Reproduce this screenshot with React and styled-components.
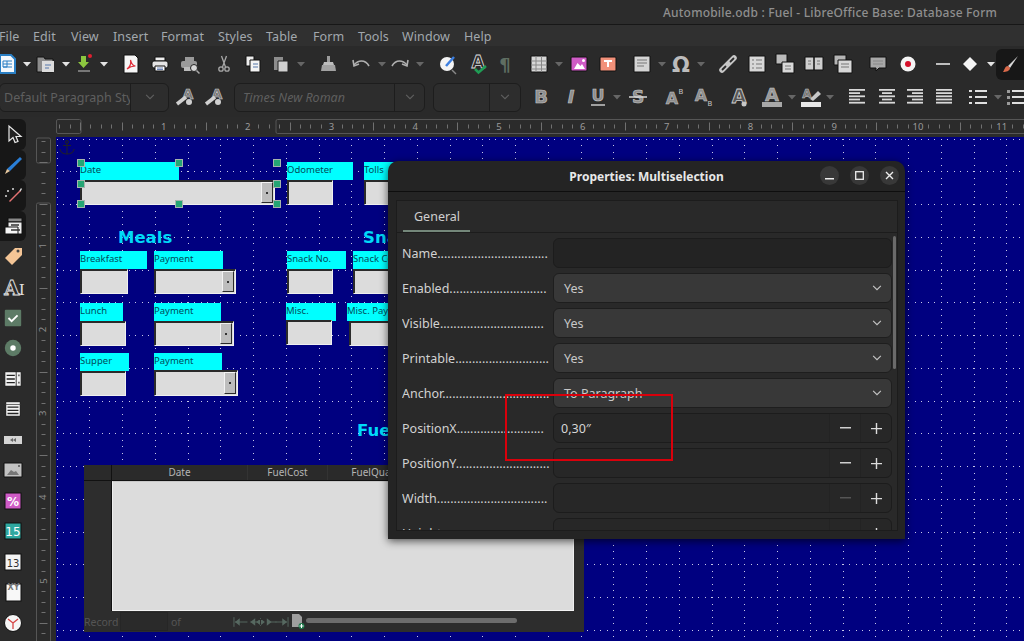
import React from 'react'
import styled, { createGlobalStyle } from 'styled-components'

const CANVAS_X = 56
const CANVAS_Y = 137
const UI_FONT = `"Noto Sans", "Open Sans", sans-serif`

const Global = createGlobalStyle`
	html, body {
		margin: 0;
		padding: 0;
		background: #2b2b2b;
		overflow: hidden;
	}
`

const Page = styled.div`
	position: relative;
	display: flex;
	flex-direction: column;
	width: 1024px;
	height: 641px;
	overflow: hidden;
	font-family: ${UI_FONT};
	background: #2b2b2b;
`

const TitleBar = styled.div`
	display: flex;
	justify-content: flex-end;
	align-items: center;
	height: 24px;
	padding-right: 27px;
	border-bottom: 1px solid #171717;
	background: #2c2c2c;
	color: #8f8f8f;
	font-size: 12px;
	font-weight: 500;
	letter-spacing: 0.2px;
`

const MenuBar = styled.div`
	display: flex;
	align-items: center;
	box-sizing: border-box;
	height: 21px;
	padding-top: 1px;
	margin-left: -1px;
	background: #303030;
`

const MenuItem = styled.span`
	width: ${p => p.$w}px;
	color: #a2a8ae;
	font-size: 12.5px;
	letter-spacing: 0.1px;
`

const Toolbar = styled.div`
	display: flex;
	align-items: center;
	box-sizing: border-box;
	height: ${p => p.$h}px;
	padding-bottom: ${p => p.$pb || 0}px;
	background: #2a2a2a;
`

const ToolSlot = styled.div`
	display: flex;
	justify-content: center;
	align-items: center;
	flex: none;
	width: ${p => p.$w}px;
	margin-left: ${p => p.$ml || 0}px;
	height: 100%;
	${p => p.$active && 'background: #171717; border-radius: 6px 0 0 6px; height: 31px;'}
	& > svg {
		flex: none;
	}
`

const Combo = styled.div`
	display: flex;
	align-items: stretch;
	flex: none;
	box-sizing: border-box;
	width: ${p => p.$w}px;
	height: 29px;
	margin-left: ${p => p.$ml}px;
	border: 1px solid #1d1d1d;
	border-radius: 6px;
	background: #2d2d2d;
	color: #5f5f5f;
	font-size: 12.5px;
`

const ComboText = styled.div`
	flex: 1;
	overflow: hidden;
	padding: 0 0 0 ${p => p.$pad}px;
	line-height: 27px;
	white-space: nowrap;
	font-style: ${p => (p.$italic ? 'italic' : 'normal')};
`

const ComboButton = styled.div`
	display: flex;
	justify-content: center;
	align-items: center;
	flex: none;
	width: ${p => p.$w}px;
	border-left: 1px solid #1d1d1d;
`

const Workspace = styled.div`
	display: flex;
	flex: 1;
	min-height: 0;
`

const Sidebar = styled.div`
	flex: none;
	display: flex;
	flex-direction: column;
	width: 27px;
	padding-top: 2px;
`

const SideSlot = styled.div`
	display: flex;
	justify-content: center;
	align-items: center;
	flex: none;
	width: 26px;
	height: 30.55px;
	${p => p.$active && 'background: #171717; border-radius: 0 6px 6px 0;'}
`

const Main = styled.div`
	display: flex;
	flex: 1;
	flex-direction: column;
	min-width: 0;
`

const HRuler = styled.div`
	flex: none;
	box-sizing: border-box;
	height: 20px;
	padding: 2px 0 0 29px;
`

const MainRow = styled.div`
	display: flex;
	flex: 1;
	min-height: 0;
`

const VRuler = styled.div`
	flex: none;
	width: 29px;
	padding-left: 9px;
	box-sizing: border-box;
`

const RulerSvg = styled.svg`
	display: block;
`

const Canvas = styled.div`
	position: relative;
	flex: 1;
	overflow: hidden;
	background: #000080;
`

const GridDots = styled.svg`
	position: absolute;
	left: 0;
	top: 0;
`

const FormLabel = styled.div`
	position: absolute;
	left: ${p => p.$x - CANVAS_X}px;
	top: ${p => p.$y - CANVAS_Y}px;
	width: ${p => p.$w}px;
	height: 18px;
	overflow: hidden;
	background: #00ffff;
	color: #004c5a;
	font-size: 9.5px;
	line-height: 15px;
	white-space: nowrap;
`

const FormField = styled.div`
	position: absolute;
	box-sizing: border-box;
	left: ${p => p.$x - CANVAS_X}px;
	top: ${p => p.$y - CANVAS_Y}px;
	width: ${p => p.$w}px;
	height: ${p => p.$h || 25}px;
	border: 1px solid;
	border-color: #2a2a2a #efefef #efefef #2a2a2a;
	box-shadow: inset 1px 1px 0 #2a2a2a;
	background: #dcdcdc;
`

const SpinBox = styled.div`
	position: absolute;
	right: 1px;
	top: 1px;
	bottom: 1px;
	width: 10px;
	display: flex;
	justify-content: center;
	align-items: center;
	border: 1px solid;
	border-color: #f2f2f2 #2a2a2a #2a2a2a #f2f2f2;
	background: #bdbdbd;
	&::after {
		content: '';
		width: 2px;
		height: 2px;
		background: #333;
	}
`

const Heading = styled.div`
	position: absolute;
	left: ${p => p.$x - CANVAS_X}px;
	top: ${p => p.$y - CANVAS_Y}px;
	color: #00daf8;
	font-family: "DejaVu Sans", sans-serif;
	font-size: 16.5px;
	font-weight: 700;
	line-height: 20px;
`

const Handle = styled.div`
	position: absolute;
	box-sizing: border-box;
	left: ${p => p.$x - CANVAS_X - 4}px;
	top: ${p => p.$y - CANVAS_Y - 4}px;
	width: 8px;
	height: 8px;
	border: 1px solid #a6b4ad;
	background: #25a574;
`

const AnchorMark = styled.div`
	position: absolute;
	left: 2px;
	top: 2px;
`

const GridControl = styled.div`
	position: absolute;
	display: flex;
	flex-direction: column;
	left: ${84 - CANVAS_X}px;
	top: ${465 - CANVAS_Y}px;
	width: 500px;
	height: 167px;
	background: #2d2d2d;
`

const GridHeader = styled.div`
	display: flex;
	flex: none;
	height: 15px;
	border-bottom: 1px solid #111;
	background: #2a2a2a;
	color: #b4b4b4;
	font-size: 10px;
	line-height: 15px;
`

const GridHeadCell = styled.div`
	flex: none;
	box-sizing: border-box;
	width: ${p => p.$w}px;
	border-right: 1px solid ${p => (p.$strong ? '#111' : '#333')};
	text-align: center;
	white-space: nowrap;
`

const GridBody = styled.div`
	display: flex;
	flex: 1;
	min-height: 0;
`

const RowHeader = styled.div`
	flex: none;
	width: 28px;
	border-right: 1px solid #111;
	box-sizing: border-box;
`

const GridWhite = styled.div`
	flex: none;
	box-sizing: border-box;
	width: 462px;
	border: 1px solid;
	border-color: #c8c8c8 #eee #f4f4f4 #eee;
	background: #dcdcdc;
`

const GridNav = styled.div`
	display: flex;
	align-items: center;
	flex: none;
	height: 21px;
	color: #555;
	font-size: 10.5px;
`

const NavText = styled.span`
	flex: none;
	width: ${p => p.$w}px;
`

const NavBox = styled.div`
	flex: none;
	box-sizing: border-box;
	width: 48px;
	height: 19px;
	margin: 0 3px 0 2px;
	border: 1px solid #262626;
	background: #2a2a2a;
`

const NavThumb = styled.div`
	flex: none;
	width: 211px;
	height: 5px;
	margin: 0 0 2px 1px;
	border-radius: 3px;
	background: #6d6d6d;
`

const NavIcon = styled.svg`
	flex: none;
	margin-left: ${p => p.$ml || 0}px;
`

const Dialog = styled.div`
	position: absolute;
	display: flex;
	flex-direction: column;
	left: 388px;
	top: 161px;
	box-sizing: border-box;
	width: 517px;
	height: 378px;
	border-radius: 10px 10px 0 0;
	background: #242424;
	box-shadow: 0 2px 9px rgba(0, 0, 0, 0.65);
`

const DialogTitle = styled.div`
	position: relative;
	display: flex;
	justify-content: center;
	align-items: center;
	flex: none;
	height: 30px;
	border-bottom: 1px solid #0e0e0e;
	color: #e8e8e8;
	font-size: 12px;
	font-weight: 700;
`

const WindowButtons = styled.div`
	position: absolute;
	right: 6px;
	top: 5px;
	display: flex;
	gap: 11px;
`

const WindowButton = styled.div`
	display: flex;
	justify-content: center;
	align-items: center;
	width: 19px;
	height: 19px;
	border-radius: 50%;
	background: #383838;
`

const Frame = styled.div`
	display: flex;
	flex-direction: column;
	box-sizing: border-box;
	height: 331px;
	margin: 8px 7px 0 8px;
	border: 1px solid #1c1c1c;
	background: #292929;
	overflow: hidden;
`

const TabBar = styled.div`
	flex: none;
	height: 31px;
	padding-left: 6px;
	border-bottom: 1px solid #1c1c1c;
`

const Tab = styled.div`
	box-sizing: border-box;
	width: 67px;
	height: 31px;
	padding: 7px 0 0 11px;
	border-bottom: 2px solid #74877a;
	color: #cfcfcf;
	font-size: 12.5px;
`

const Props = styled.div`
	position: relative;
	display: flex;
	flex-direction: column;
	gap: 5px;
	padding: 5px 0 0 5px;
`

const Row = styled.div`
	display: flex;
	flex: none;
	align-items: center;
	height: 30px;
`

const RowLabel = styled.div`
	flex: none;
	width: 151px;
	overflow: hidden;
	color: #d2d2d2;
	font-size: 12.5px;
	white-space: nowrap;
`

const Select = styled.div`
	display: flex;
	justify-content: space-between;
	align-items: center;
	box-sizing: border-box;
	width: 339px;
	height: 30px;
	padding: 0 9px 0 10px;
	border: 1px solid #1e1e1e;
	border-radius: 6px;
	background: #383838;
	color: #c8c8c8;
	font-size: 12.5px;
`

const Entry = styled.div`
	display: flex;
	align-items: center;
	box-sizing: border-box;
	width: 339px;
	height: 30px;
	padding-left: 7px;
	border: 1px solid #1c1c1c;
	border-radius: 6px;
	background: ${p => (p.$plain ? '#232323' : '#272727')};
	color: #d6d6d6;
	font-size: 12.5px;
`

const EntryValue = styled.div`
	flex: 1;
`

const SpinButton = styled.div`
	display: flex;
	justify-content: center;
	align-items: center;
	flex: none;
	width: 30px;
	height: 28px;
	border-left: 1px solid #232323;
`

const Scrollbar = styled.div`
	position: absolute;
	right: 1px;
	top: 3px;
	width: 3px;
	height: 133px;
	border-radius: 2px;
	background: #6a6a6a;
`

const RedBox = styled.div`
	position: absolute;
	box-sizing: border-box;
	left: 505px;
	top: 394px;
	width: 168px;
	height: 67px;
	border: 2px solid #d9000b;
`

const Ic = ({ s = 22, children }) => (
	<svg width={s} height={s} viewBox="0 0 22 22" fill="none">{children}</svg>
)

const Drop = ({ dim }) => (
	<svg width="8" height="5" viewBox="0 0 8 5"><path d="M0 0h8L4 4.500z" fill={dim ? '#666' : '#e4e4e4'} /></svg>
)

const Chevron = ({ color = '#c4c4c4' }) => (
	<svg width="10" height="6" viewBox="0 0 11 7" fill="none"><path d="M1 1l4.500 4.500L10 1" stroke={color} strokeWidth="1.300" /></svg>
)

const icons = {
	doc: <Ic><path d="M3 2h11l4 4v14H3z" fill="#f4f8fc" stroke="#2a7fc4" strokeWidth="2" /><path d="M6 8h9M6 11h9M6 14h9M6 8v6h4V8" stroke="#2a7fc4" /></Ic>,
	open: <Ic><path d="M2 4h7l1 2h8v13H2z" fill="#8c8c8c" stroke="#111" /><path d="M7 8h12v11H7z" fill="#dcdcdc" /><path d="M10 12h6M10 15h4" stroke="#5577aa" /></Ic>,
	save: <Ic><path d="M8 3h5v6h3l-5.500 6L5 9h3z" fill="#8cc63f" /><circle cx="17" cy="3" r="2" fill="#e02030" /><path d="M5 18h12" stroke="#777" strokeWidth="2" /></Ic>,
	pdf: <Ic><path d="M4 2h11l3 3v15H4z" fill="#f6f6f6" stroke="#111" /><path d="M7 16c3-2 4-6 3.500-9 1 4 3 6 5 6-3 0-6 1-8.500 3z" stroke="#e0303c" strokeWidth="1.200" /></Ic>,
	print: <Ic><path d="M6 4h10v4H6z" fill="#eee" stroke="#111" /><rect x="3" y="8" width="16" height="7" rx="2" fill="#e4e4e4" stroke="#111" /><path d="M6 13h10v5H6z" fill="#fff" stroke="#111" /><path d="M8 15h6M8 16.500h6" stroke="#6d84b4" /></Ic>,
	preview: <Ic><path d="M6 4h9v4H6z" fill="#999" /><rect x="2" y="8" width="16" height="7" rx="2" fill="#9a9a9a" /><path d="M5 14h8v4H5z" fill="#bbb" /><circle cx="15" cy="15" r="3.500" fill="#d8d8d8" stroke="#222" /><path d="M17.500 17.500l3 3" stroke="#aaa" strokeWidth="1.500" /></Ic>,
	cut: <Ic><path d="M8.500 3l4 11M13.500 3l-4 11" stroke="#a8a8a8" strokeWidth="1.300" /><circle cx="8" cy="16" r="2.200" stroke="#a8a8a8" strokeWidth="1.300" /><circle cx="14" cy="16" r="2.200" stroke="#a8a8a8" strokeWidth="1.300" /></Ic>,
	copy: <Ic><path d="M4 3h8v10H4z" fill="#eee" stroke="#111" /><path d="M8 7h10v12H8z" fill="#f4f4f4" stroke="#111" /><path d="M11 11h5M11 14h5" stroke="#5577aa" /></Ic>,
	paste: <Ic><path d="M4 4h9v13H4z" fill="#8d8d8d" /><path d="M8 8h10v11H8z" fill="#d0d0d0" stroke="#222" /></Ic>,
	clone: <Ic><path d="M10 3h3v6h-3z" fill="#9c9c9c" /><path d="M7 9h9l1 3H6z" fill="#bdbdbd" /><path d="M5 12h13l1 6H4z" fill="#a2a2a2" /></Ic>,
	undo: <Ic><path d="M3 7l1 6 5-2" stroke="#b0b0b0" strokeWidth="1.600" /><path d="M4 12c4-5 11-6 15 1" stroke="#b0b0b0" strokeWidth="1.600" /></Ic>,
	redo: <Ic><path d="M19 7l-1 6-5-2" stroke="#b0b0b0" strokeWidth="1.600" /><path d="M18 12c-4-5-11-6-15 1" stroke="#b0b0b0" strokeWidth="1.600" /></Ic>,
	spell: <Ic><circle cx="10" cy="11" r="7" fill="#f4f4f4" /><path d="M9 13L17 4" stroke="#3d7fe0" strokeWidth="2.500" /><path d="M15 17l4 4" stroke="#888" strokeWidth="1.500" /></Ic>,
	acheck: <Ic><text x="11" y="15" textAnchor="middle" fontFamily="DejaVu Sans" fontWeight="700" fontSize="17" fill="#2a2a2a" stroke="#dcdcdc" strokeWidth="0.800">A</text><path d="M8 16l3.500 3.500L19 13" stroke="#1f9d55" strokeWidth="2.500" /></Ic>,
	table: <Ic><path d="M3 3h16v16H3z" fill="#d6d6d6" stroke="#111" /><path d="M3 8h16M3 12h16M3 16h16M8 3v16M13.500 3v16" stroke="#888" /></Ic>,
	image: <Ic><rect x="3" y="4" width="16" height="14" rx="1" fill="#cf5bc6" stroke="#111" /><path d="M6 16l3.500-6 3 3 1.500-2 3 5z" fill="#fff" /><circle cx="15.500" cy="7.500" r="1.500" fill="#fff" /></Ic>,
	textbox: <Ic><rect x="3" y="4" width="16" height="14" rx="1" fill="#f2917a" stroke="#111" /><path d="M7 7h8v2h-3v5h-2V9H7z" fill="#fff" /></Ic>,
	field: <Ic><path d="M3 3h16v16H3z" fill="#d4d4d4" stroke="#111" /><path d="M6 7h10M6 10h10M6 13h7" stroke="#777" /></Ic>,
	omega: <Ic><text x="11" y="19" textAnchor="middle" fontFamily="DejaVu Sans" fontWeight="700" fontSize="21" fill="#bcbcbc">Ω</text></Ic>,
	link: <Ic><path d="M5 17L17 5" stroke="#c8c8c8" strokeWidth="5.500" strokeLinecap="round" /><path d="M5.500 16.500l3-3M13.500 8.500l3-3" stroke="#2a2a2a" strokeWidth="1.800" strokeLinecap="round" /></Ic>,
	list: <Ic><path d="M3 3h16v16H3z" fill="#d8d8d8" stroke="#111" /><path d="M6 7h2M10 7h6M6 11h2M10 11h6M6 15h2M10 15h6" stroke="#777" /></Ic>,
	pages: <Ic><path d="M2 1h11v10H2z" fill="#bbb" stroke="#111" /><path d="M8 9h12v11H8z" fill="#d8d8d8" stroke="#111" /><path d="M11 13h6M11 16h6" stroke="#777" /></Ic>,
	book: <Ic><path d="M2 4h9v13H2zM11 4h9v13h-9z" fill="#cfcfcf" stroke="#111" /><path d="M5 8h3M14 8h3M5 11h3M14 11h3" stroke="#777" /></Ic>,
	cross: <Ic><path d="M2 2h12v10H2z" fill="#b5b5b5" stroke="#111" /><path d="M6 7h14v13H6z" fill="#d8d8d8" stroke="#111" /><path d="M9 11h8M9 14h8" stroke="#777" /></Ic>,
	comment: <Ic><path d="M3 4h16v11h-7l-3 3v-3H3z" fill="#a8a8a8" stroke="#111" /><path d="M6 8h10M6 11h10" stroke="#888" /></Ic>,
	record: <Ic><circle cx="11" cy="11" r="7.500" fill="#f4f4f4" /><circle cx="11" cy="11" r="3" fill="#d5102a" /></Ic>,
	line: <Ic><path d="M4 11h14" stroke="#f0f0f0" strokeWidth="1.500" /></Ic>,
	diamond: <Ic><path d="M11 4l7 7-7 7-7-7z" fill="#f4f4f4" /></Ic>,
	brush: <Ic><path d="M19 3L9 13l2 2z" fill="#d8d8d8" /><path d="M9 13c-3 0-3 3-5 6 3 0 7-1 7-4z" fill="#d9694a" /></Ic>,
	styleA: <Ic><text x="14" y="13" textAnchor="middle" fontFamily="DejaVu Sans" fontWeight="700" fontSize="14" fill="#777" stroke="#ccc" strokeWidth="0.600">A</text><path d="M3 18l9-7" stroke="#d0d0d0" strokeWidth="3.500" /><circle cx="15" cy="16" r="3" fill="#d0d0d0" /></Ic>,
}

const glyph = (text, extra = {}) => (
	<Ic>
		<text x="11" y="17" textAnchor="middle" fontFamily="DejaVu Sans" fontWeight="700" fontSize="17" fill="#8e8e8e" stroke="#c8c8c8" strokeWidth="0.600" {...extra}>{text}</text>
	</Ic>
)

const alignIcon = (rows) => (
	<Ic>
		{rows.map(([x, w], i) => <rect key={i} x={x} y={3 + i * 3.2} width={w} height="1.800" fill="#d8d8d8" />)}
	</Ic>
)

const formatIcons = {
	bold: glyph('B', { fontSize: 18 }),
	italic: glyph('I', { fontStyle: 'italic', fontSize: 18 }),
	underline: <Ic><text x="11" y="15" textAnchor="middle" fontFamily="DejaVu Sans" fontWeight="700" fontSize="16" fill="#8e8e8e" stroke="#c8c8c8" strokeWidth="0.600">U</text><path d="M4 19h14" stroke="#c8c8c8" strokeWidth="1.500" /></Ic>,
	strike: <Ic><text x="11" y="17" textAnchor="middle" fontFamily="DejaVu Sans" fontWeight="700" fontSize="17" fill="#8e8e8e" stroke="#c8c8c8" strokeWidth="0.600">S</text><path d="M2 11h18" stroke="#d8d8d8" strokeWidth="1.500" /></Ic>,
	sup: <Ic><text x="9" y="18" textAnchor="middle" fontFamily="DejaVu Sans" fontWeight="700" fontSize="16" fill="#8e8e8e" stroke="#c8c8c8" strokeWidth="0.500">A</text><text x="18" y="8" textAnchor="middle" fontFamily="DejaVu Sans" fontSize="7" fill="#c8c8c8">B</text></Ic>,
	sub: <Ic><text x="9" y="15" textAnchor="middle" fontFamily="DejaVu Sans" fontWeight="700" fontSize="16" fill="#8e8e8e" stroke="#c8c8c8" strokeWidth="0.500">A</text><text x="18" y="20" textAnchor="middle" fontFamily="DejaVu Sans" fontSize="7" fill="#c8c8c8">B</text></Ic>,
	shadow: <Ic><text x="11" y="17" textAnchor="middle" fontFamily="DejaVu Sans" fontWeight="700" fontSize="19" fill="#555" stroke="#cfcfcf" strokeWidth="0.800">A</text><circle cx="16" cy="18" r="2.500" fill="#c8c8c8" /></Ic>,
	color: <Ic><text x="11" y="15" textAnchor="middle" fontFamily="DejaVu Sans" fontWeight="700" fontSize="18" fill="#999" stroke="#c8c8c8" strokeWidth="0.500">A</text><rect x="1" y="16" width="20" height="5" fill="#a8a8a8" /></Ic>,
	highlight: <Ic><text x="7" y="12" textAnchor="middle" fontFamily="DejaVu Sans" fontWeight="700" fontSize="12" fill="#777" stroke="#c8c8c8" strokeWidth="0.500">A</text><path d="M10 13l8-8 3 3-8 7z" fill="#c8c8c8" /><rect x="1" y="16" width="20" height="5" fill="#e8e8e8" /></Ic>,
	left: alignIcon([[3, 16], [3, 11], [3, 16], [3, 11], [3, 16]]),
	center: alignIcon([[3, 16], [6, 10], [3, 16], [6, 10], [3, 16]]),
	right: alignIcon([[3, 16], [8, 11], [3, 16], [8, 11], [3, 16]]),
	justify: alignIcon([[3, 16], [3, 16], [3, 16], [3, 16], [3, 16]]),
	bullets: <Ic>{[4, 10, 16].map(y => <g key={y}><rect x="2" y={y} width="3" height="2" fill="#e0e0e0" /><rect x="8" y={y} width="12" height="2" fill="#e0e0e0" /></g>)}</Ic>,
	numbers: <Ic>{[4, 10, 16].map(y => <g key={y}><rect x="3" y={y} width="3" height="3" fill="#9a9a9a" /><rect x="8" y={y} width="13" height="2" fill="#e0e0e0" /></g>)}</Ic>,
}

const topTools = [
	[8, icons.doc], [27, <Drop />], [46, icons.open], [66, <Drop />], [84, icons.save], [104, <Drop />],
	[131, icons.pdf], [160, icons.print], [190, icons.preview], [224, icons.cut], [253, icons.copy],
	[281, icons.paste], [301, <Drop dim />], [328, icons.clone], [361, icons.undo], [382, <Drop dim />],
	[400, icons.redo], [420, <Drop dim />], [448, icons.spell], [478, icons.acheck],
	[505, <Ic><text x="11" y="18" textAnchor="middle" fontFamily="DejaVu Sans" fontSize="18" fontWeight="700" fill="#5f6e62">¶</text></Ic>],
	[539, icons.table], [559, <Drop dim />], [579, icons.image], [608, icons.textbox], [642, icons.field],
	[662, <Drop dim />], [681, icons.omega], [701, <Drop dim />], [728, icons.link], [757, icons.list],
	[785, icons.pages], [814, icons.book], [843, icons.cross], [878, icons.comment], [908, icons.record],
	[943, icons.line], [970, icons.diamond], [991, <Drop />],
]

const formatTools = [
	[541, formatIcons.bold], [571, formatIcons.italic], [598, formatIcons.underline], [617, <Drop dim />],
	[638, formatIcons.strike], [674, formatIcons.sup], [703, formatIcons.sub], [739, formatIcons.shadow],
	[772, formatIcons.color], [792, <Drop dim />], [811, formatIcons.highlight], [830, <Drop dim />],
	[857, formatIcons.left], [887, formatIcons.center], [915, formatIcons.right], [944, formatIcons.justify],
	[978, formatIcons.bullets], [998, <Drop dim />], [1015, formatIcons.numbers],
]

// fixed width slots, the margin is what puts each icon's centre on the given x
const SLOT = 16
const withMargins = (tools, start) => {
	let edge = start
	return tools.map(([c, icon]) => {
		const ml = c - SLOT / 2 - edge
		edge = c + SLOT / 2
		return { ml, icon }
	})
}

const menus = [
	['File', 34], ['Edit', 38], ['View', 42], ['Insert', 48], ['Format', 57], ['Styles', 48],
	['Table', 47], ['Form', 45], ['Tools', 44], ['Window', 62], ['Help', 40],
]

const sideIcons = [
	<Ic><path d="M7 3v15l4-3.500 2 5 3-1-2-5h5z" fill="#222" stroke="#e8e8e8" strokeWidth="1.200" /></Ic>,
	<Ic><path d="M18 3l2 2L8 17l-3-2z" fill="#2a7fd8" /><path d="M5 15l-2 5 5-3z" fill="#e8c9a0" /></Ic>,
	<Ic><path d="M18 6L7 17l1 1L19 7z" fill="#e57373" /><path d="M17.500 6.500l1 1L20 5l-1-1z" fill="#ddd" /><circle cx="6" cy="7" r="1" fill="#ddd" /><circle cx="11" cy="5" r="1" fill="#ddd" /><circle cx="4" cy="12" r="1" fill="#ddd" /></Ic>,
	<Ic><path d="M6 3h14v4H6z" fill="#888" stroke="#111" /><path d="M6 7h14v12H6z" fill="#eee" stroke="#111" /><path d="M3 12h13v7H3z" fill="#f6f6f6" stroke="#111" /><path d="M9 10h8M9 15h9" stroke="#333" strokeWidth="1.300" /></Ic>,
	<Ic><path d="M3 13L13 3h7v7L10 20z" fill="#f4c596" /><circle cx="16" cy="6" r="1.500" fill="#444" /></Ic>,
	<Ic s={24}><text x="10" y="18" textAnchor="middle" fontFamily="DejaVu Serif" fontWeight="700" fontSize="18" fill="#2a2a2a" stroke="#e0e0e0" strokeWidth="0.800">A</text><text x="19" y="18" textAnchor="middle" fontFamily="DejaVu Serif" fontSize="14" fill="#e0e0e0">I</text></Ic>,
	<Ic s={20}><rect x="2" y="2" width="18" height="18" rx="1" fill="#5d7b66" /><path d="M6 11l3.500 3.500L16 8" stroke="#fff" strokeWidth="2" /></Ic>,
	<Ic s={20}><circle cx="11" cy="11" r="9" fill="#5d7b66" /><circle cx="11" cy="11" r="3" fill="#fff" /></Ic>,
	<Ic s={20}><path d="M2 3h18v16H2z" fill="#f2f2f2" stroke="#111" /><path d="M4 7h9M4 11h9M4 15h9" stroke="#222" strokeWidth="1.500" /><path d="M14.500 3v16" stroke="#222" /><path d="M17.500 8V6M17.500 16v-2" stroke="#444" strokeWidth="1.500" /></Ic>,
	<Ic s={20}><path d="M3 3h16v16H3z" fill="#f2f2f2" stroke="#111" /><path d="M5 9h12M5 12.500h12M5 16h12" stroke="#222" strokeWidth="1.500" /><path d="M3 6h16" stroke="#555" /></Ic>,
	<Ic><rect x="2" y="7" width="18" height="8" fill="#d4d4d4" /><path d="M11 9l-3 2 3 2zM14 9l-3 2 3 2z" fill="#666" /></Ic>,
	<Ic><path d="M2 4h18v14H2z" fill="#c2c2c2" stroke="#111" /><path d="M5 16l4-5 3 2 2-1 3 4z" fill="#777" /><circle cx="17" cy="7" r="1" fill="#555" /></Ic>,
	<Ic><rect x="3" y="3" width="16" height="16" fill="#cf5bc6" stroke="#111" /><text x="11" y="16" textAnchor="middle" fontFamily="DejaVu Sans" fontWeight="700" fontSize="12" fill="#fff">%</text></Ic>,
	<Ic><rect x="3" y="3" width="16" height="16" fill="#2fa8a0" stroke="#111" /><text x="11" y="16" textAnchor="middle" fontFamily="DejaVu Sans" fontSize="12" fill="#fff">15</text></Ic>,
	<Ic><rect x="3" y="3" width="16" height="16" fill="#f4f4f4" stroke="#111" /><text x="11" y="15.500" textAnchor="middle" fontFamily="DejaVu Sans" fontSize="10" fill="#333">13</text></Ic>,
	<Ic><rect x="4" y="3" width="15" height="17" fill="#f8f8f8" stroke="#111" /><text x="11.500" y="9" textAnchor="middle" fontFamily="DejaVu Sans" fontWeight="700" fontSize="8" fill="#777">XY</text></Ic>,
	<Ic><circle cx="11" cy="11" r="8.500" fill="#f6f6f6" stroke="#111" /><path d="M11 11V17M11 11L6 7M11 11l5-4" stroke="#d64545" strokeWidth="1.300" /></Ic>,
]

const INCH = 83.8

const Ruler = ({ vertical, length, zero, boxes, lastNumber }) => {
	const ticks = []
	for (let i = -2; zero + i * (INCH / 8) < length; i++) {
		if (i % 8 === 0 && i !== 0) continue
		const half = i % 4 === 0
		ticks.push({ p: Math.round(zero + i * (INCH / 8)), len: half ? 8 : 4 })
	}
	const mid = 7.5
	const nums = []
	for (let n = 1; n <= lastNumber; n++) nums.push(n)
	const w = vertical ? 15 : length
	const h = vertical ? length : 15
	return (
		<RulerSvg width={w} height={h}>
			{boxes.map(([a, b], i) => (
				vertical
					? <rect key={i} x="0.500" y={a} width="14" height={b - a} rx="1.500" fill="none" stroke="#565656" />
					: <rect key={i} x={a} y="0.500" width={b - a} height="14" rx="1.500" fill="none" stroke="#565656" />
			))}
			{ticks.map(t => (
				vertical
					? <rect key={t.p} x={mid - t.len / 2} y={t.p} width={t.len} height="1" fill="#707070" />
					: <rect key={t.p} x={t.p} y={mid - t.len / 2} width="1" height={t.len} fill="#707070" />
			))}
			{nums.map(n => {
				const p = zero + n * INCH
				return vertical
					? <text key={n} x={mid} y={p + 3} textAnchor="middle" fontFamily="Noto Sans" fontSize="9.500" fill="#8c8c8c" transform={`rotate(-90 ${mid} ${p})`}>{n}</text>
					: <text key={n} x={p} y={mid + 3.500} textAnchor="middle" fontFamily="Noto Sans" fontSize="9.500" fill="#9a9a9a">{n}</text>
			})}
		</RulerSvg>
	)
}

const gridPath = (width, height) => {
	const step = 32.75
	const sub = step / 5
	let d = ''
	for (let y = 1.5; y < height; y += step) {
		for (let x = 0.5; x < width; x += sub) d += `M${Math.round(x)} ${Math.round(y)}h1v1h-1z`
	}
	for (let x = 0.5; x < width; x += step) {
		for (let y = 1.5; y < height; y += sub) d += `M${Math.round(x)} ${Math.round(y)}h1v1h-1z`
	}
	return d
}

const dotsPath = gridPath(968, 504)

const labels = [
	['Date', 80, 162, 99], ['Odometer', 287, 162, 66], ['Tolls', 364, 162, 40],
	['Breakfast', 80, 251, 67], ['Payment', 154, 251, 69], ['Snack No.', 287, 251, 59], ['Snack Cost', 353, 251, 50],
	['Lunch', 80, 303, 43], ['Payment', 154, 303, 67], ['Misc.', 286, 303, 50], ['Misc. Payment', 347, 303, 50],
	['Supper', 80, 353, 49], ['Payment', 154, 353, 67.5],
]

const fields = [
	{ x: 80, y: 180, w: 195, spin: true },
	{ x: 287, y: 180, w: 46 },
	{ x: 364, y: 180, w: 40 },
	{ x: 80, y: 269, w: 48 },
	{ x: 154, y: 269, w: 82, spin: true },
	{ x: 287, y: 269, w: 46 },
	{ x: 353, y: 269, w: 50 },
	{ x: 80, y: 321, w: 46 },
	{ x: 154, y: 321, w: 80, spin: true },
	{ x: 286, y: 320, w: 46 },
	{ x: 349, y: 321, w: 50 },
	{ x: 80, y: 371, w: 46 },
	{ x: 154, y: 370, w: 84, h: 26, spin: true },
]

const handles = [
	[81, 163], [179, 163], [277, 163], [81, 184], [277, 184], [81, 204], [179, 204], [277, 204],
]

const dots = (n) => '.'.repeat(n)

const rows = [
	{ label: 'Name', n: 33, kind: 'plain' },
	{ label: 'Enabled', n: 29, value: 'Yes', kind: 'select' },
	{ label: 'Visible', n: 31, value: 'Yes', kind: 'select' },
	{ label: 'Printable', n: 28, value: 'Yes', kind: 'select' },
	{ label: 'Anchor', n: 32, value: 'To Paragraph', kind: 'select' },
	{ label: 'PositionX', n: 26, value: '0,30″', kind: 'spin' },
	{ label: 'PositionY', n: 28, kind: 'spin' },
	{ label: 'Width', n: 33, kind: 'spin', dimMinus: true },
	{ label: 'Height', n: 31, kind: 'spin' },
]

const Minus = ({ dim }) => (
	<svg width="11" height="2"><rect width="11" height="1.500" fill={dim ? '#555' : '#cfcfcf'} /></svg>
)

const Plus = () => (
	<svg width="11" height="11"><path d="M0 5h11v1.300H0zM4.800 0h1.400v11H4.800z" fill="#dcdcdc" /></svg>
)

const PropRow = ({ row }) => (
	<Row>
		<RowLabel>{row.label}{dots(row.n)}</RowLabel>
		{row.kind === 'select' && (
			<Select>
				{row.value}
				<Chevron />
			</Select>
		)}
		{row.kind === 'plain' && <Entry $plain />}
		{row.kind === 'spin' && (
			<Entry>
				<EntryValue>{row.value}</EntryValue>
				<SpinButton><Minus dim={row.dimMinus} /></SpinButton>
				<SpinButton><Plus /></SpinButton>
			</Entry>
		)}
	</Row>
)

const NavArrows = () => (
	<NavIcon width="56" height="12" viewBox="0 0 58 12">
		<path d="M1 1v10M2 6h13M27 6h-9M36 6h9M57 1v10M56 6H44" stroke="#566860" fill="none" />
		<path d="M2 6l5-4v8zM18 6l5-4v8zM24 6l5-4v8zM40 6l-5-4v8zM33 6l-5-4v8zM56 6l-5-4v8z" fill="#566860" />
	</NavIcon>
)

const NavNewDoc = () => (
	<NavIcon $ml={2} width="14" height="15" viewBox="0 0 14 15">
		<path d="M1 0h7l3 3v10H1z" fill="#9e9e9e" />
		<circle cx="10.500" cy="12" r="3" fill="#1f7a4c" />
		<path d="M8.500 12h4M10.500 10v4" stroke="#fff" />
	</NavIcon>
)

const App = () => (
	<Page>
		<Global />
		<TitleBar>Automobile.odb : Fuel - LibreOffice Base: Database Form</TitleBar>
		<MenuBar>
			{menus.map(([m, w]) => <MenuItem key={m} $w={w}>{m}</MenuItem>)}
		</MenuBar>
		<Toolbar $h={36}>
			{withMargins(topTools, 0).map((t, i) => <ToolSlot key={i} $w={SLOT} $ml={t.ml}>{t.icon}</ToolSlot>)}
			<ToolSlot $w={28} $ml={-3} $active>{icons.brush}</ToolSlot>
		</Toolbar>
		<Toolbar $h={35} $pb={5}>
			<Combo $w={170} $ml={-1}>
				<ComboText $pad={4}>Default Paragraph Sty</ComboText>
				<ComboButton $w={37}><Chevron color="#5f5f5f" /></ComboButton>
			</Combo>
			<ToolSlot $w={29} $ml={1}>{icons.styleA}</ToolSlot>
			<ToolSlot $w={29}>{icons.styleA}</ToolSlot>
			<Combo $w={191} $ml={6}>
				<ComboText $pad={8} $italic>Times New Roman</ComboText>
				<ComboButton $w={29}><Chevron color="#5f5f5f" /></ComboButton>
			</Combo>
			<Combo $w={88} $ml={8}>
				<ComboText $pad={0} />
				<ComboButton $w={30}><Chevron color="#5f5f5f" /></ComboButton>
			</Combo>
			{withMargins(formatTools, 521).map((t, i) => <ToolSlot key={i} $w={SLOT} $ml={t.ml}>{t.icon}</ToolSlot>)}
		</Toolbar>
		<Workspace>
			<Sidebar>
				{sideIcons.map((icon, i) => <SideSlot key={i} $active={i < 4}>{icon}</SideSlot>)}
			</Sidebar>
			<Main>
				<HRuler>
					<Ruler length={968} zero={24} boxes={[[0.5, 25], [220, 975]]} lastNumber={11} />
				</HRuler>
				<MainRow>
					<VRuler>
						<Ruler vertical length={504} zero={25} boxes={[[1, 26], [66, 520]]} lastNumber={5} />
					</VRuler>
					<Canvas>
						<GridDots width="968" height="504"><path d={dotsPath} fill="#c9c9e8" /></GridDots>
						<AnchorMark>
							<svg width="18" height="18" viewBox="0 0 18 18" fill="none">
								<circle cx="9" cy="3" r="1.500" stroke="#222" />
								<path d="M9 4.500V15M5 6.500h8M2 10c0 3 3 5 7 5s7-2 7-5" stroke="#222" />
							</svg>
						</AnchorMark>
						{labels.map(([text, x, y, w], i) => <FormLabel key={i} $x={x} $y={y} $w={w}>{text}</FormLabel>)}
						{fields.map((f, i) => (
							<FormField key={i} $x={f.x} $y={f.y} $w={f.w} $h={f.h}>
								{f.spin && <SpinBox />}
							</FormField>
						))}
						{handles.map(([x, y], i) => <Handle key={i} $x={x} $y={y} />)}
						<Heading $x={118} $y={228}>Meals</Heading>
						<Heading $x={363} $y={228}>Snacks</Heading>
						<Heading $x={357} $y={421}>Fuel</Heading>
						<GridControl>
							<GridHeader>
								<GridHeadCell $w={28} $strong />
								<GridHeadCell $w={136}>Date</GridHeadCell>
								<GridHeadCell $w={80}>FuelCost</GridHeadCell>
								<GridHeadCell $w={108}>FuelQuantity</GridHeadCell>
							</GridHeader>
							<GridBody>
								<RowHeader />
								<GridWhite />
							</GridBody>
							<GridNav>
								<NavText $w={34}>Record</NavText>
								<NavBox />
								<NavText $w={62}>of</NavText>
								<NavArrows />
								<NavNewDoc />
								<NavThumb />
							</GridNav>
						</GridControl>
					</Canvas>
				</MainRow>
			</Main>
		</Workspace>
		<Dialog>
			<DialogTitle>
				Properties: Multiselection
				<WindowButtons>
					<WindowButton>
						<svg width="9" height="9"><rect y="7" width="9" height="1.500" fill="#eee" /></svg>
					</WindowButton>
					<WindowButton>
						<svg width="9" height="9"><rect x="0.700" y="0.700" width="7.600" height="7.600" fill="none" stroke="#eee" strokeWidth="1.300" /></svg>
					</WindowButton>
					<WindowButton>
						<svg width="9" height="9"><path d="M1 1l7 7M8 1L1 8" stroke="#eee" strokeWidth="1.400" /></svg>
					</WindowButton>
				</WindowButtons>
			</DialogTitle>
			<Frame>
				<TabBar>
					<Tab>General</Tab>
				</TabBar>
				<Props>
					<Scrollbar />
					{rows.map(r => <PropRow key={r.label} row={r} />)}
				</Props>
			</Frame>
		</Dialog>
		<RedBox />
	</Page>
)

export default App
